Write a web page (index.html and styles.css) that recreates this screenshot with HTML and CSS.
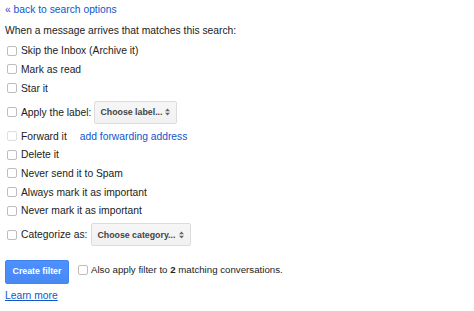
FILE: index.html
```html
<!DOCTYPE html>
<html lang="en">
  <head>
    <meta charset="UTF-8" />
    <meta name="viewport" content="width=device-width, initial-scale=1.0" />
    <title>Create filter</title>
    <link rel="stylesheet" href="styles.css">
  </head>
  <body>
    <div class="filter">
      <a class="back" href="#">&laquo; back to search options</a>
      <div class="intro">When a message arrives that matches this search:</div>
      <!-- 过滤操作 -->
      <div class="options">
        <label class="row"><input class="check" type="checkbox" />Skip the Inbox (Archive it)</label>
        <label class="row"><input class="check" type="checkbox" />Mark as read</label>
        <label class="row"><input class="check" type="checkbox" />Star it</label>
        <div class="row with-select">
          <input class="check" type="checkbox" />Apply the label:
          <div class="select label-select">
            <span>Choose label...</span>
            <svg class="arrows" width="5" height="8" viewBox="0 0 5 8"><path d="M0 3.2 L2.5 0.4 L5 3.2 Z M0 4.8 L2.5 7.6 L5 4.8 Z" fill="#666"/></svg>
          </div>
        </div>
        <div class="row">
          <input class="check" type="checkbox" disabled />Forward it
          <a class="link forward" href="#">add forwarding address</a>
        </div>
        <label class="row"><input class="check" type="checkbox" />Delete it</label>
        <label class="row"><input class="check" type="checkbox" />Never send it to Spam</label>
        <label class="row"><input class="check" type="checkbox" />Always mark it as important</label>
        <label class="row"><input class="check" type="checkbox" />Never mark it as important</label>
        <div class="row with-select">
          <input class="check" type="checkbox" />Categorize as:
          <div class="select category-select">
            <span>Choose category...</span>
            <svg class="arrows" width="5" height="8" viewBox="0 0 5 8"><path d="M0 3.2 L2.5 0.4 L5 3.2 Z M0 4.8 L2.5 7.6 L5 4.8 Z" fill="#666"/></svg>
          </div>
        </div>
      </div>
      <div class="actions">
        <div class="create">Create filter</div>
        <label class="also"><input class="check" type="checkbox" /><span>Also apply filter to <b>2</b> matching conversations.</span></label>
      </div>
      <a class="link learn" href="#">Learn more</a>
    </div>
  </body>
</html>
```

FILE: styles.css
```css
body {
  margin: 0;
  font-family: "Liberation Sans", Arial, sans-serif;
  font-size: 10.3px;
  color: #222;
  background-color: #fff;
}

.filter {
  padding: 1px 5px 0;
}

.back,
.link {
  color: #15c;
  text-decoration: none;
}

.back {
  display: block;
  height: 18.7px;
  line-height: 18.7px;
}

.intro {
  margin-top: 2px;
  height: 18.7px;
  line-height: 18.7px;
}

.options {
  margin-top: 1px;
}

.row {
  display: flex;
  align-items: center;
  height: 18.7px;
  white-space: nowrap;
}

.row.with-select {
  height: 29.3px;
}

.check {
  appearance: none;
  -webkit-appearance: none;
  box-sizing: border-box;
  width: 10px;
  height: 10px;
  margin: 0 4px 0 2px;
  border: 1px solid #bdbdbd;
  border-radius: 2px;
  background-color: #fff;
  flex: none;
}

.check:disabled {
  border-color: #dedede;
}

/* 下拉框 */
.select {
  display: flex;
  align-items: center;
  box-sizing: border-box;
  height: 23px;
  margin-left: 3px;
  padding: 0 6px 0 5px;
  border: 1px solid #dcdcdc;
  border-radius: 2px;
  background: linear-gradient(#f6f6f6, #f1f1f1);
  font-size: 8.8px;
  font-weight: bold;
  color: #444;
}

.label-select {
  width: 83px;
}

.category-select {
  width: 100px;
  margin-left: 4px;
}

.arrows {
  margin-left: auto;
}

.forward {
  margin-left: 13px;
}

/* 底部按钮 */
.actions {
  display: flex;
  align-items: center;
  margin-top: 11px;
}

.create {
  box-sizing: border-box;
  width: 64px;
  height: 23.5px;
  line-height: 21.5px;
  text-align: center;
  border: 1px solid #3f85f0;
  border-radius: 2px;
  background: linear-gradient(#4d90fe, #4889f4);
  color: #fff;
  font-size: 8.8px;
  font-weight: bold;
}

.also {
  display: flex;
  align-items: center;
  margin: 0 0 5px 9px;
  font-size: 9.7px;
  white-space: nowrap;
}

.also .check {
  margin: 0 3px 0 0;
}

.learn {
  display: inline-block;
  margin-top: 3px;
  height: 18.7px;
  line-height: 18.7px;
  text-decoration: underline;
}
```
